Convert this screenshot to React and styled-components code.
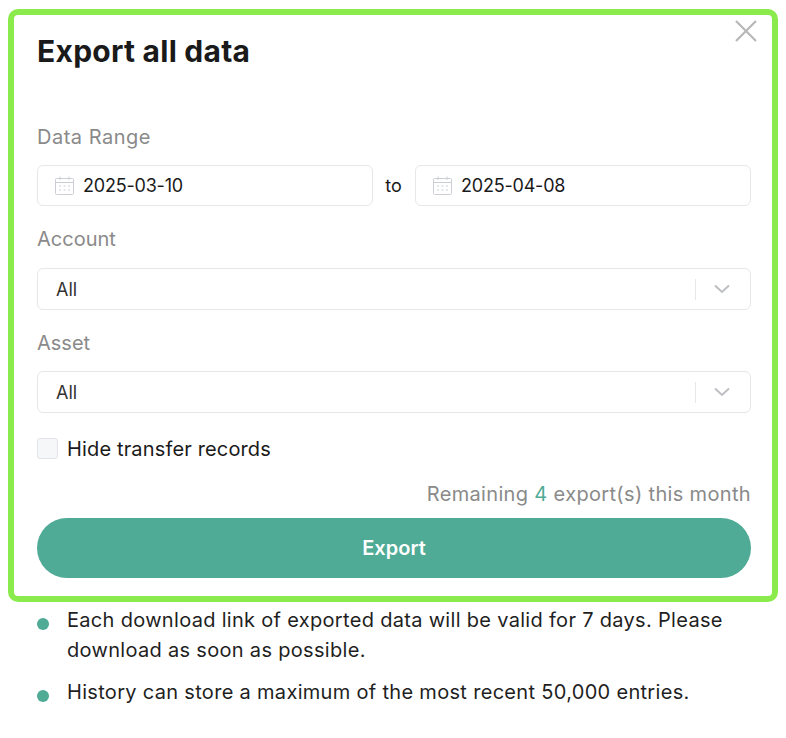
import styled, { createGlobalStyle } from 'styled-components';

const GlobalStyle = createGlobalStyle`
    * { box-sizing: border-box; }
    body {
        margin: 0;
        background-color: #FFFFFF;
        font-family: 'Inter', 'Noto Sans', sans-serif;
    }
`;

function CalendarIcon() {
    return (
        <svg width="19" height="19" viewBox="0 0 19 19" fill="none" stroke="#CBCED6" strokeWidth="1">
            <rect x="0.5" y="2.5" width="18" height="16" rx="1" />
            <path d="M0.5 6.5H18.5M5 0.5V4M14 0.5V4" />
            <path d="M4 10H6M8.5 10H10.5M13 10H15M4 14H6M8.5 14H10.5M13 14H15" strokeWidth="1.2" />
        </svg>
    );
}

function ChevronIcon() {
    return (
        <svg width="16" height="10" viewBox="0 0 16 10" fill="none" stroke="#BDBFC3" strokeWidth="2">
            <path d="M1 1.5L8 8L15 1.5" />
        </svg>
    );
}

function DateField({ value }) {
    return (
        <DateBox>
            <CalendarIcon />
            <span>{value}</span>
        </DateBox>
    );
}

function SelectField({ value }) {
    return (
        <SelectBox>
            <span>{value}</span>
            <SelectArrow>
                <ChevronIcon />
            </SelectArrow>
        </SelectBox>
    );
}

export default function App() {
    return (
        <>
            <GlobalStyle />
            <Frame>
                <CloseButton aria-label="Close">
                    <svg width="22" height="22" viewBox="0 0 22 22" fill="none" stroke="#B8B8B8" strokeWidth="2.2">
                        <path d="M1 1L21 21M21 1L1 21" />
                    </svg>
                </CloseButton>
                <Title>Export all data</Title>
                <RangeLabel>Data Range</RangeLabel>
                <DateRow>
                    <DateField value="2025-03-10" />
                    <To>to</To>
                    <DateField value="2025-04-08" />
                </DateRow>
                <FieldLabel>Account</FieldLabel>
                <SelectField value="All" />
                <FieldLabel $short>Asset</FieldLabel>
                <SelectField value="All" />
                <CheckRow>
                    <CheckBox />
                    <span>Hide transfer records</span>
                </CheckRow>
                <Remaining>
                    Remaining <strong>4</strong> export(s) this month
                </Remaining>
                <ExportButton>Export</ExportButton>
            </Frame>
            <Notes>
                <Note>Each download link of exported data will be valid for 7 days. Please download as soon as possible.</Note>
                <Note>History can store a maximum of the most recent 50,000 entries.</Note>
            </Notes>
        </>
    );
}

const Frame = styled.div`
    position: relative;
    width: 770px;
    height: 593px;
    margin: 9px 0 0 8px;
    padding: 0 21px 0 23px;
    border: 6px solid #8BEB4C;
    border-radius: 10px;
    background-color: #FFFFFF;
`;

const CloseButton = styled.button`
    position: absolute;
    top: 5px;
    right: 15px;
    width: 22px;
    height: 22px;
    padding: 0;
    border: none;
    background: none;
    display: flex;
`;

const Title = styled.h1`
    margin: 0;
    padding-top: 15px;
    height: 76px;
    font-size: 30px;
    line-height: 42px;
    font-weight: 700;
    letter-spacing: 0.25px;
    color: #1A1A1A;
`;

const RangeLabel = styled.div`
    margin-top: 30px;
    height: 44px;
    font-size: 20px;
    line-height: 32px;
    letter-spacing: 0.5px;
    color: #8A8A8A;
`;

const FieldLabel = styled.div`
    height: ${(props) => (props.$short ? '61px' : '62px')};
    padding-top: 17px;
    font-size: 20px;
    line-height: 32px;
    color: #8A8A8A;
`;

const DateRow = styled.div`
    display: flex;
    align-items: center;
`;

const DateBox = styled.div`
    flex: 1;
    height: 41px;
    display: flex;
    align-items: center;
    gap: 9px;
    padding-left: 17px;
    border: 1px solid #E6E7EA;
    border-radius: 6px;
    font-size: 18px;
    letter-spacing: -0.2px;
    color: #1A1A1A;
`;

const To = styled.span`
    width: 42px;
    padding-right: 1px;
    text-align: center;
    font-size: 18px;
    color: #1A1A1A;
`;

const SelectBox = styled.div`
    height: 42px;
    display: flex;
    align-items: center;
    justify-content: space-between;
    padding-left: 18px;
    border: 1px solid #E6E7EA;
    border-radius: 6px;
    font-size: 18px;
    color: #333333;
`;

const SelectArrow = styled.div`
    width: 55px;
    height: 21px;
    padding-right: 3px;
    display: flex;
    align-items: center;
    justify-content: center;
    border-left: 1px solid #E6E7EA;
`;

const CheckRow = styled.label`
    display: flex;
    align-items: center;
    gap: 9px;
    margin-top: 25px;
    height: 21px;
    font-size: 20px;
    letter-spacing: 0.15px;
    color: #1A1A1A;
`;

const CheckBox = styled.span`
    width: 21px;
    height: 21px;
    border: 1px solid #E3E4E7;
    border-radius: 3px;
    background-color: #F6F7F9;
`;

const Remaining = styled.div`
    margin-top: 21px;
    height: 38px;
    text-align: right;
    font-size: 20px;
    line-height: 28px;
    letter-spacing: 0.34px;
    color: #8A8A8A;

    strong {
        font-weight: 400;
        color: #4FAA96;
    }
`;

const ExportButton = styled.button`
    display: block;
    width: 100%;
    height: 60px;
    border: none;
    border-radius: 30px;
    background-color: #4FAA96;
    color: #FFFFFF;
    font-family: inherit;
    font-size: 20px;
    font-weight: 600;
`;

const Notes = styled.ul`
    list-style: none;
    margin: 3px 0 0;
    padding: 0 48px 0 37px;
`;

const Note = styled.li`
    position: relative;
    padding-left: 30px;
    margin-bottom: 12px;
    font-size: 20px;
    line-height: 30px;
    letter-spacing: 0.31px;
    color: #1F1F1F;

    &::before {
        content: '';
        position: absolute;
        left: 0;
        top: 13px;
        width: 12px;
        height: 12px;
        border-radius: 50%;
        background-color: #4FAA96;
    }
`;
